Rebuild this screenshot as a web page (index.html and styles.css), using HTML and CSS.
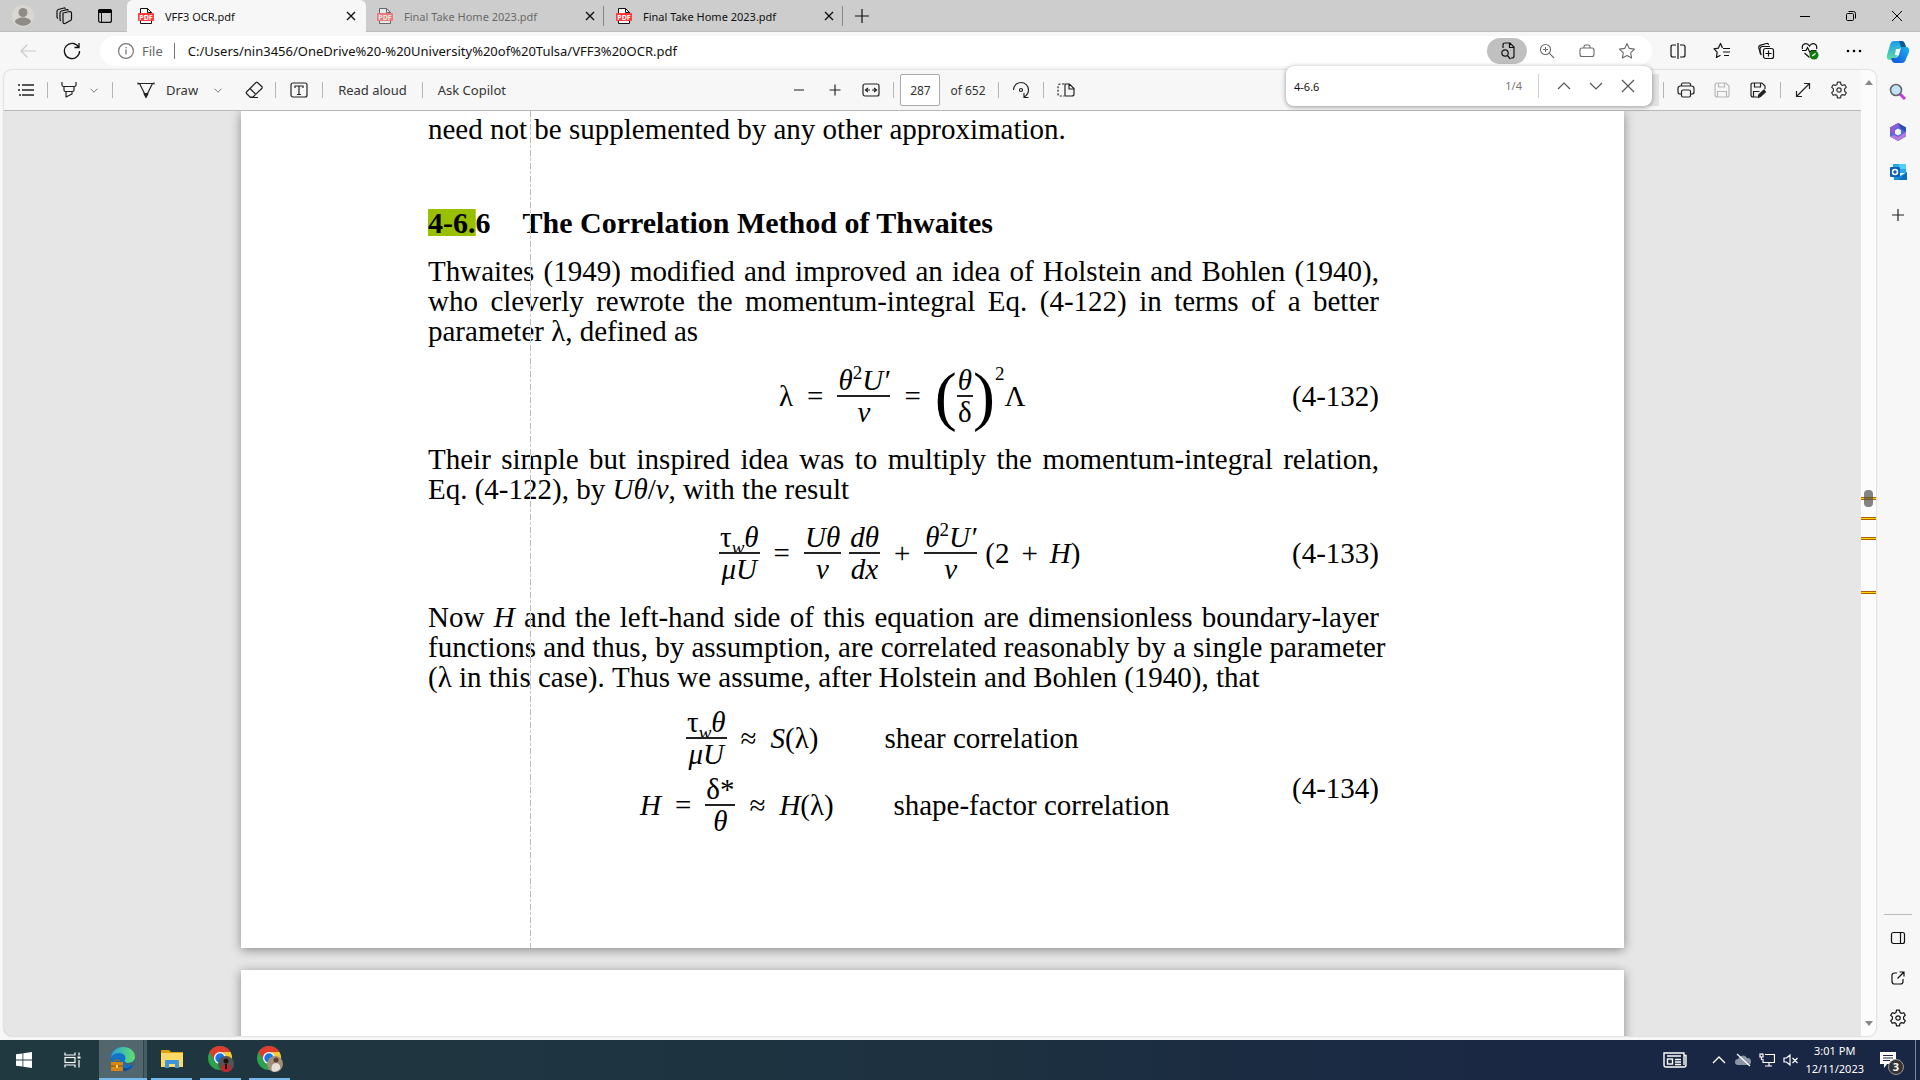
FILE: index.html
```html
<!DOCTYPE html>
<html lang="en">
<head>
    <meta charset="UTF-8">
    <meta name="viewport" content="width=device-width, initial-scale=1.0">
    <title>VFF3 OCR.pdf</title>
    <link rel="stylesheet" href="styles.css">
</head>
<body>

    <!-- Shared icons -->
    <svg class="defs" width="0" height="0">
        <symbol id="pdf" viewBox="0 0 16 16">
            <path d="M2.5 15.5v-15h7l4 4v11z" fill="#fff" stroke="#111"/>
            <path d="M9.5.5v4h4" fill="none" stroke="#111"/>
            <rect y="5" width="16" height="8" rx="1" fill="#ff3b3b"/>
            <text x="8" y="11.500" class="pdf-label">PDF</text>
        </symbol>
        <symbol id="x" viewBox="0 0 16 16"><path d="M4 4l8 8M12 4l-8 8" fill="none" stroke="currentColor" stroke-width="1.400"/></symbol>
        <symbol id="down" viewBox="0 0 16 16"><path d="M4 6.500l4 4 4-4" fill="none" stroke="currentColor"/></symbol>
        <symbol id="gear" viewBox="0 0 18 18">
            <g fill="none" stroke="currentColor" stroke-width="1.200" stroke-linejoin="round">
                <path d="M7.500 1.200h3l.5 2.300 1.500.9 2.300-.7 1.500 2.600-1.700 1.600v2.200l1.700 1.600-1.500 2.600-2.300-.7-1.500.9-.5 2.300h-3L7 14.500l-1.500-.9-2.300.7-1.500-2.600 1.700-1.600V7.900L1.700 6.300l1.500-2.600 2.300.7L7 3.500z"/>
                <circle cx="9" cy="9" r="2.200"/>
            </g>
        </symbol>
        <symbol id="chrome" viewBox="0 0 26 26">
            <circle cx="12" cy="12" r="12" fill="#2ba24c"/>
            <path d="M1.600 6A12 12 0 0 1 22.400 6H12a6 6 0 0 0-5.200 9z" fill="#e33b2e"/>
            <path d="M22.400 6A12 12 0 0 1 12 24l5.200-9A6 6 0 0 0 12 6z" fill="#fcc934"/>
            <circle cx="12" cy="12" r="6" fill="#fff"/>
            <circle cx="12" cy="12" r="4.700" fill="#1a73e8"/>
        </symbol>
    </svg>

    <!-- Tab strip -->
    <header class="tabstrip">
        <button class="strip-btn" aria-label="Profile">
            <svg width="22" height="22" viewBox="0 0 22 22"><circle cx="11" cy="11" r="11" fill="#dad7d3"/><circle cx="11" cy="7.500" r="4.500" fill="#8e8a86"/><path d="M3 17c0-6 16-6 16 0-4 5-12 5-16 0z" fill="#8e8a86"/></svg>
        </button>
        <button class="strip-btn" aria-label="Workspaces">
            <svg width="18" height="18" viewBox="0 0 18 18" fill="none" stroke="#111" stroke-width="1.200" stroke-linejoin="round"><path d="M8 6l7-1.500q1.500 0 1.500 1.500v6q0 1-1 1.500L10 16.500q-2 .5-2-1.500z"/><path d="M13.500 3.500Q13 2.500 12 2.700L6.500 4Q5 4.500 5 6v6.500q0 1 1 1.200M10.500 1.700Q10 .8 9 1L3.300 2.500Q2 3 2 4.300V10q0 1 1 1.500"/></svg>
        </button>
        <button class="strip-btn" aria-label="Tab actions">
            <svg width="16" height="16" viewBox="0 0 16 16"><rect x="1.600" y="1.600" width="12.800" height="12.800" rx="2" fill="none" stroke="#111" stroke-width="1.200"/><path d="M1 5V3q0-2 2-2h10q2 0 2 2v2z"/><path d="M4.500 5v9.500" stroke="#111"/></svg>
        </button>
        <div class="tab active">
            <svg class="favicon"><use href="#pdf"/></svg>
            <span>VFF3 OCR.pdf</span>
            <button aria-label="Close tab"><svg width="16" height="16"><use href="#x"/></svg></button>
        </div>
        <div class="tab sleeping">
            <svg class="favicon"><use href="#pdf"/></svg>
            <span>Final Take Home 2023.pdf</span>
            <button aria-label="Close tab"><svg width="16" height="16"><use href="#x"/></svg></button>
        </div>
        <div class="tab">
            <svg class="favicon"><use href="#pdf"/></svg>
            <span>Final Take Home 2023.pdf</span>
            <button aria-label="Close tab"><svg width="16" height="16"><use href="#x"/></svg></button>
        </div>
        <button class="new-tab" aria-label="New tab"><svg width="16" height="16" viewBox="0 0 16 16"><path d="M8 1v14M1 8h14" stroke="#111" stroke-width="1.200"/></svg></button>
        <div class="window-controls">
            <button aria-label="Minimize"><svg width="12" height="12" viewBox="0 0 12 12"><path d="M1 6.500h10" stroke="#000"/></svg></button>
            <button aria-label="Restore"><svg width="12" height="12" viewBox="0 0 12 12" fill="none" stroke="#000"><rect x="1.500" y="3.500" width="7" height="7" rx="1"/><path d="M3.500 1.500h5q2 0 2 2v5"/></svg></button>
            <button aria-label="Close"><svg width="12" height="12" viewBox="0 0 12 12"><path d="M1 1l10 10M11 1L1 11" stroke="#000"/></svg></button>
        </div>
    </header>

    <div class="browser">
        <div class="window">
            <!-- Address bar -->
            <nav class="navbar">
                <button aria-label="Back" disabled><svg width="18" height="18" viewBox="0 0 18 18" fill="none" stroke="#c9c9c9" stroke-width="1.200"><path d="M17 9H2M8.500 2.500L2 9l6.500 6.500"/></svg></button>
                <button aria-label="Refresh"><svg width="18" height="18" viewBox="0 0 18 18" fill="none" stroke="#111" stroke-width="1.300"><path d="M15.500 5A7.600 7.600 0 1 0 16.600 9M16 1v4.500h-4.500"/></svg></button>
                <div class="omnibox">
                    <svg width="18" height="18" viewBox="0 0 18 18"><circle cx="9" cy="9" r="7.400" fill="none" stroke="#777" stroke-width="1.200"/><path d="M9 7.500v5M9 5v1.300" stroke="#777" stroke-width="1.300"/></svg>
                    <label for="url">File</label>
                    <input id="url" type="text" value="C:/Users/nin3456/OneDrive%20-%20University%20of%20Tulsa/VFF3%20OCR.pdf">
                    <button class="on" aria-label="Find on page"><svg width="16" height="18" viewBox="0 0 16 18" fill="none" stroke="#111" stroke-width="1.200"><path d="M4 6V3q0-2 2-2h5l4 4v9q0 2-2 2h-1M10.500 1v4.500H15"/><circle cx="6" cy="11" r="3.200"/><path d="M8.300 13.500l3.200 3.500"/></svg></button>
                    <button aria-label="Zoom"><svg width="16" height="16" viewBox="0 0 16 16" fill="none" stroke="#6b6b6b" stroke-width="1.100"><circle cx="6.500" cy="6.500" r="5"/><path d="M10.200 10.200L15 15M4 6.500h5M6.500 4v5"/></svg></button>
                    <button aria-label="Shopping"><svg width="16" height="16" viewBox="0 0 16 16" fill="none" stroke="#6b6b6b" stroke-width="1.100"><rect x="1" y="5" width="14" height="8.500" rx="2"/><path d="M5 5V3.500Q5 2 6.500 2h3Q11 2 11 3.500V5"/></svg></button>
                    <button aria-label="Favorite"><svg width="18" height="18" viewBox="0 0 18 18" fill="none" stroke="#6b6b6b" stroke-width="1.100" stroke-linejoin="round"><path d="M9 1.500l2.300 4.900 5.200.7-3.800 3.700.9 5.300L9 13.600l-4.600 2.500.9-5.300L1.500 7.100l5.200-.7z"/></svg></button>
                </div>
                <button aria-label="Split screen"><svg width="18" height="18" viewBox="0 0 18 18" fill="none" stroke="#111" stroke-width="1.200"><path d="M7 3H4Q2 3 2 5v8q0 2 2 2h3M11 3h3q2 0 2 2v8q0 2-2 2h-3M9 1v16"/></svg></button>
                <button aria-label="Favorites"><svg width="18" height="18" viewBox="0 0 18 18" fill="none" stroke="#111" stroke-width="1.200" stroke-linejoin="round"><path d="M9.500 6L7.500 1.500 5.300 6.200 1 6.800l3.200 3.400-.8 5.300 4.100-2.200M10 6.500h7M10 10h7M11 13.500h5"/></svg></button>
                <button aria-label="Collections"><svg width="18" height="18" viewBox="0 0 18 18" fill="none" stroke="#111" stroke-width="1.200"><path d="M4 12L1.800 6Q1.300 4 3 3.400L9.500 1.500q1.700-.3 2.300 1.300"/><path d="M4.500 13Q3 12 3 10V7q0-2.500 2.500-2.500H13"/><rect x="6.500" y="6.500" width="10" height="10" rx="2" fill="#f7f7f7"/><path d="M11.500 8.500v6M8.500 11.500h6"/></svg></button>
                <button aria-label="Browser essentials"><svg width="18" height="18" viewBox="0 0 18 18" fill="none" stroke="#111" stroke-width="1.200"><path d="M1.500 7C0 1.500 6 0 8.500 4 11 0 17 1.500 15.500 7M1 8.500h4l1.500-3 2.500 5 1.500-2h5M3.500 11l5 4.500"/><circle cx="13" cy="13" r="4.500" fill="#107c10" stroke="none"/><path d="M11.200 14l3.300-2.500" stroke="#fff"/></svg></button>
                <button aria-label="Settings and more"><svg width="16" height="4" viewBox="0 0 16 4"><circle cx="2" cy="2" r="1.300"/><circle cx="8" cy="2" r="1.300"/><circle cx="14" cy="2" r="1.300"/></svg></button>
            </nav>

            <main class="panel">
                <div class="viewer">
                    <div class="toolbar">
                        <div class="tools tools-left">
                            <button class="small" aria-label="Contents"><svg width="18" height="14" viewBox="0 0 18 14" stroke="#222" stroke-width="1.400"><path d="M1 2h2M1 7h2M5 2h12M5 7h12M5 12h12"/><path d="M4 12H2"/></svg></button>
                            <i class="sep"></i>
                            <button class="small" aria-label="Highlight"><svg width="16" height="18" viewBox="0 0 16 18" fill="none" stroke="#222" stroke-width="1.200" stroke-linejoin="round"><path d="M1 1v3q0 1.500 1.500 1.500h11Q15 5.500 15 4V1M3 5.500V9q0 1.500 1.500 1.500h7Q13 10.500 13 9V5.500M5 10.500V16l6-3v-2.500"/></svg></button>
                            <button class="chev" aria-label="Highlight options"><svg width="14" height="14"><use href="#down"/></svg></button>
                            <i class="sep"></i>
                            <button class="draw"><svg width="18" height="18" viewBox="0 0 18 18" fill="none" stroke="#222" stroke-width="1.200" stroke-linejoin="round"><path d="M1 2.500h16M2.500 2.500L9 15.500l6.500-13M1 1.500v2M17 1.500v2"/><path d="M7 12.500h4l-2 4z" fill="#222"/></svg>Draw</button>
                            <button class="chev" aria-label="Draw options"><svg width="14" height="14"><use href="#down"/></svg></button>
                            <button class="small eraser" aria-label="Erase"><svg width="18" height="18" viewBox="0 0 18 18" fill="none" stroke="#222" stroke-width="1.200" stroke-linejoin="round"><path d="M11 1.500L1.500 11q-.7.7 0 1.500l3.500 3.500h3L17 7.200q.5-.7 0-1.400L12.500 1.500q-.7-.6-1.500 0zM5 7.500l6 6M5 16.500h8"/></svg></button>
                            <i class="sep"></i>
                            <button class="add-text" aria-label="Add text"><svg width="18" height="16" viewBox="0 0 18 16" fill="none" stroke="#222" stroke-width="1.200"><rect x="1" y="1" width="16" height="14" rx="2"/><path d="M5 6V4h8v2M9 4v8.500M7 12.500h4"/></svg></button>
                            <i class="sep"></i>
                            <button class="text">Read aloud</button>
                            <i class="sep"></i>
                            <button class="text">Ask Copilot</button>
                        </div>
                        <div class="tools">
                            <button aria-label="Zoom out"><svg width="12" height="12" viewBox="0 0 12 12"><path d="M1 6h10" stroke="#888" stroke-width="2"/></svg></button>
                            <button aria-label="Zoom in"><svg width="12" height="12" viewBox="0 0 12 12"><path d="M.5 6h11M6 .5v11" stroke="#222" stroke-width="1.200"/></svg></button>
                            <button aria-label="Fit to width"><svg width="18" height="14" viewBox="0 0 18 14" fill="none" stroke="#222" stroke-width="1.200"><rect x="1" y="1" width="16" height="12" rx="2"/><path d="M3.500 7H8M10 7h4.500M6 5L3.500 7 6 9M12 5l2.500 2L12 9"/></svg></button>
                            <i class="sep"></i>
                            <input id="page-number" type="text" value="287">
                            <label for="page-number">of 652</label>
                            <i class="sep"></i>
                            <button aria-label="Rotate"><svg width="18" height="18" viewBox="0 0 18 18" fill="none" stroke="#222" stroke-width="1.200"><path d="M1.500 9A7.300 7.300 0 0 1 16.500 9q0 4-4 7M12 12v4.500h4.500"/><circle cx="9" cy="9" r="1.500"/></svg></button>
                            <i class="sep"></i>
                            <button aria-label="Page view"><svg width="18" height="14" viewBox="0 0 18 14" fill="none" stroke="#222" stroke-width="1.200"><path d="M7 1H3Q1 1 1 3v8q0 2 2 2h4" stroke-dasharray="2 1.500"/><path d="M8 1h4.500L17 5.500V11q0 2-2 2H8zM12 1v5h5"/></svg></button>
                        </div>
                        <div class="tools tools-right">
                            <button class="pressed" aria-label="Find"></button>
                            <i class="sep"></i>
                            <button aria-label="Print"><svg width="18" height="16" viewBox="0 0 18 16" fill="none" stroke="#222" stroke-width="1.200"><path d="M4.500 4V2.500Q4.500 1 6 1h6q1.500 0 1.500 1.500V4M4.500 12H3q-2 0-2-2V6.500Q1 4 3.500 4h11Q17 4 17 6.500V10q0 2-2 2h-1.500"/><rect x="4.500" y="8" width="9" height="7" rx="1.500"/></svg></button>
                            <button aria-label="Save" disabled><svg width="16" height="16" viewBox="0 0 16 16" fill="none" stroke="#b8b8b8" stroke-width="1.200"><path d="M3 1h9l3 3v9q0 2-2 2H3q-2 0-2-2V3q0-2 2-2zM4.500 1v4h6V1M3.500 15V9.500h9V15"/></svg></button>
                            <button aria-label="Save as"><svg width="16" height="16" viewBox="0 0 16 16" fill="none" stroke="#222" stroke-width="1.200"><path d="M7 15H3q-2 0-2-2V3q0-2 2-2h9l3 3v3M4.500 1v4h6V1M3.500 15V9.500h6"/><path d="M8 15.500l1-3 5-4.500 1.500 2-5 4.500z" fill="#222"/></svg></button>
                            <i class="sep"></i>
                            <button aria-label="Full screen"><svg width="16" height="16" viewBox="0 0 16 16" fill="none" stroke="#222" stroke-width="1.200"><path d="M9 1.500h5.500V7M7 14.500H1.500V9M14.500 1.500l-13 13"/></svg></button>
                            <button aria-label="Settings"><svg width="18" height="18"><use href="#gear"/></svg></button>
                        </div>
                    </div>

                    <!-- Document -->
                    <div class="document">
                        <article class="page">
                            <p class="lead">need not be supplemented by any other approximation.</p>
                            <h2><mark>4-6.</mark>6<span>The Correlation Method of Thwaites</span></h2>
                            <p>
                                <span class="full">Thwaites (1949) modified and improved an idea of Holstein and Bohlen (1940),</span>
                                <span class="full">who cleverly rewrote the momentum-integral Eq. (4-122) in terms of a better</span>
                                <span>parameter λ, defined as</span>
                            </p>
                            <div class="equation eq-132">
                                <span>λ</span><span>=</span>
                                <span class="frac"><span><i>θ</i><sup>2</sup><i>U′</i></span><span><i>ν</i></span></span>
                                <span>=</span>
                                <span class="group"><span class="big">(</span><span class="frac"><span><i>θ</i></span><span>δ</span></span><span class="big">)</span><sup class="power">2</sup><span>Λ</span></span>
                                <span class="number">(4-132)</span>
                            </div>
                            <p>
                                <span class="full">Their simple but inspired idea was to multiply the momentum-integral relation,</span>
                                <span>Eq. (4-122), by <i>Uθ</i>/<i>ν</i>, with the result</span>
                            </p>
                            <div class="equation eq-133">
                                <span class="frac"><span>τ<sub>w</sub><i>θ</i></span><span><i>μU</i></span></span>
                                <span>=</span>
                                <span class="group pair"><span class="frac"><span><i>Uθ</i></span><span><i>ν</i></span></span><span class="frac"><span><i>dθ</i></span><span><i>dx</i></span></span></span>
                                <span>+</span>
                                <span class="group pair"><span class="frac"><span><i>θ</i><sup>2</sup><i>U′</i></span><span><i>ν</i></span></span><span class="group sum"><span>(2</span><span>+</span><span><i>H</i>)</span></span></span>
                                <span class="number">(4-133)</span>
                            </div>
                            <p>
                                <span class="full">Now <i>H</i> and the left-hand side of this equation are dimensionless boundary-layer</span>
                                <span class="full">functions and thus, by assumption, are correlated reasonably by a single parameter</span>
                                <span>(λ in this case). Thus we assume, after Holstein and Bohlen (1940), that</span>
                            </p>
                            <div class="system">
                                <div class="rows">
                                    <div class="equation eq-shear">
                                        <span class="frac"><span>τ<sub>w</sub><i>θ</i></span><span><i>μU</i></span></span>
                                        <span>≈</span>
                                        <span class="term"><i>S</i>(λ)</span>
                                        <span class="note">shear correlation</span>
                                    </div>
                                    <div class="equation">
                                        <span><i>H</i></span><span>=</span>
                                        <span class="frac"><span>δ*</span><span><i>θ</i></span></span>
                                        <span>≈</span>
                                        <span class="term"><i>H</i>(λ)</span>
                                        <span class="note">shape-factor correlation</span>
                                    </div>
                                </div>
                                <span class="number">(4-134)</span>
                            </div>
                        </article>
                        <article class="page next"></article>
                    </div>
                </div>

                <!-- Scrollbar with search hits -->
                <div class="scrollbar">
                    <i class="arrow up"></i>
                    <i class="hit" style="top: 44.2%"></i>
                    <i class="hit" style="top: 46.3%"></i>
                    <i class="hit" style="top: 48.3%"></i>
                    <i class="hit" style="top: 53.9%"></i>
                    <i class="thumb" style="top: 43.5%"></i>
                    <i class="arrow down"></i>
                </div>
            </main>

            <form class="find">
                <input type="text" value="4-6.6" aria-label="Find on page">
                <span>1/4</span>
                <button type="button" aria-label="Previous"><svg width="16" height="16" viewBox="0 0 16 16"><path d="M2 11l6-6 6 6" fill="none" stroke="#555" stroke-width="1.200"/></svg></button>
                <button type="button" aria-label="Next"><svg width="16" height="16" viewBox="0 0 16 16"><path d="M2 5l6 6 6-6" fill="none" stroke="#555" stroke-width="1.200"/></svg></button>
                <button type="button" aria-label="Close"><svg width="16" height="16" viewBox="0 0 16 16"><path d="M2 2l12 12M14 2L2 14" fill="none" stroke="#555" stroke-width="1.200"/></svg></button>
            </form>
        </div>

        <!-- Edge sidebar -->
        <aside class="sidebar">
            <button aria-label="Copilot"><svg width="24" height="24" viewBox="0 0 24 24">
                <defs><linearGradient id="cp1" x1="0" y1="0" x2="0" y2="1"><stop offset="0" stop-color="#1a9cf0"/><stop offset="1" stop-color="#5fe0a0"/></linearGradient><linearGradient id="cp2" x1="1" y1="0" x2="0" y2="1"><stop offset="0" stop-color="#18b4f0"/><stop offset="1" stop-color="#1450d8"/></linearGradient></defs>
                <path d="M8 1h8q2 0 3 3l1 3h-4l-3 2-3 10-3 1H4q-4 0-3-5L4 5q1-4 4-4z" fill="url(#cp1)"/>
                <path d="M16 23H9q-2 0-3-2l-1-3h5l3-3 2-8h5q4 0 3 5l-3 7q-1 4-4 4z" fill="url(#cp2)"/>
                <path d="M13 1h3q2 0 3 3l1 3h-5z" fill="#0b5a94"/><path d="M10 9h4l-2 6H9z" fill="#fff"/></svg></button>
            <button aria-label="Search"><svg width="18" height="18" viewBox="0 0 18 18"><path d="M11 11l5 5" stroke="#c239e6" stroke-width="3"/><circle cx="7" cy="7" r="5.500" fill="#bfe4f8" stroke="#666" stroke-width="1.600"/></svg></button>
            <button aria-label="Microsoft 365"><svg width="18" height="18" viewBox="0 0 18 18"><path d="M9 0l8 4.500v9L9 18l-8-4.500v-9z" fill="#5568d8"/><path d="M1 9v-4.500L9 0l3 2-6 4v6z" fill="#8c5fd0"/><path d="M1 13.500L9 18l8-4.500V9l-8 5-4-2z" fill="#b77ae0"/><path d="M9 0l8 4.500V9l-5-3z" fill="#2a50b8"/><path d="M9 5.500l3 1.800v3.400l-3 1.800-3-1.800V7.300z" fill="#f7f7f7"/></svg></button>
            <button aria-label="Outlook"><svg width="18" height="18" viewBox="0 0 18 18"><path d="M4 1h12q1 0 1 1v8H4z" fill="#28a8ea"/><path d="M10 1h7v5h-7z" fill="#50d0f8"/><path d="M4 9l7 4 7-4v8H5z" fill="#1490df"/><path d="M18 9v8H9z" fill="#0f6cbd"/><rect x="1" y="4" width="10" height="10" rx="1" fill="#0a62b8"/><circle cx="6" cy="9" r="2.500" fill="none" stroke="#fff" stroke-width="1.500"/></svg></button>
            <button aria-label="Customize"><svg width="14" height="14" viewBox="0 0 14 14"><path d="M1 7h12M7 1v12" stroke="#222" stroke-width="1.200"/></svg></button>
            <hr>
            <button aria-label="Hide sidebar"><svg width="16" height="16" viewBox="0 0 16 16" fill="none" stroke="#111" stroke-width="1.200"><rect x="1.500" y="2.500" width="13" height="11" rx="2"/><path d="M10.500 2.500v11"/></svg></button>
            <button aria-label="Open in new tab"><svg width="16" height="16" viewBox="0 0 16 16" fill="none" stroke="#111" stroke-width="1.200"><path d="M7 3H4.500Q2 3 2 5.500v6Q2 14 4.500 14h6q2.500 0 2.500-2.500V9M9.500 2H14v4.500M14 2L7.500 8.500"/></svg></button>
            <button aria-label="Settings"><svg width="18" height="18"><use href="#gear"/></svg></button>
        </aside>
    </div>

    <!-- Windows taskbar -->
    <footer class="taskbar">
        <button aria-label="Start"><svg width="16" height="16" viewBox="0 0 16 16" fill="#fff"><path d="M0 2.300L6.500 1.400v6.200H0zM7.300 1.300L16 0v7.600H7.300zM0 8.400h6.500v6.200L0 13.700zM7.300 8.400H16V16l-8.700-1.300z"/></svg></button>
        <button aria-label="Task view"><svg width="17" height="16" viewBox="0 0 17 16" fill="none" stroke="#fff" stroke-width="1.200"><path d="M1 .5V3h10V.5M1 15.500V13h10v2.500M15 .5v3M15 8v7.500"/><rect x="1" y="5.500" width="10" height="5"/><path d="M13.500 5.500h3" stroke-width="2"/></svg></button>
        <button class="app current" aria-label="Microsoft Edge"><svg width="26" height="26" viewBox="0 0 26 26">
            <defs><linearGradient id="ed" x1="0" y1="0" x2="1" y2="0"><stop offset="0" stop-color="#2aa0e8"/><stop offset="1" stop-color="#5fe06a"/></linearGradient></defs>
            <circle cx="13" cy="13" r="12" fill="#1272c8"/>
            <path d="M1 13C1 5 7 1 13 1c8 0 12 5 12 10 0 4-4 6-7 6s-4-2-3-3c2-4-2-7-6-7-5 0-8 3-8 6z" fill="url(#ed)"/>
            <path d="M15 14c-1 2 1 3 3 3 3 0 6-1 7-4v6l-6 0c-4 0-5-3-4-5z" fill="#47616b"/>
            <path d="M9 13c-2 6 4 10 9 9l5-3c-2 4-6 6-10 6-6 0-8-8-4-12z" fill="#0c4a9c"/>
            <rect x="1" y="16" width="12" height="9" fill="#d98410"/><path d="M1 20h12" stroke="#8a4a08"/><path d="M5 16v-2h4v2" fill="none" stroke="#b86a08"/><path d="M6 19h2v3H6z" fill="#ffe08a"/></svg></button>
        <button class="app" aria-label="File Explorer"><svg width="22" height="20" viewBox="0 0 22 20"><path d="M0 1h8l2 2h12v15H0z" fill="#e0a010"/><path d="M0 4h22v14H0z" fill="#ffd968"/><path d="M4 19v-7q0-1 1-1h12q1 0 1 1v7h-4v-4H8v4z" fill="#3d95dc"/></svg></button>
        <button class="app" aria-label="Chrome"><svg width="26" height="26" viewBox="0 0 26 26"><use href="#chrome" width="26" height="26"/><circle cx="18" cy="18" r="8" fill="#555"/><circle cx="18" cy="15" r="2.500" fill="#1c1210"/><path d="M13 24q0-6 5-6t5 6q-5 4-10 0z" fill="#c0262c"/><path d="M17 18h2v5h-2z" fill="#111"/></svg></button>
        <button class="app" aria-label="Chrome"><svg width="26" height="26" viewBox="0 0 26 26"><use href="#chrome" width="26" height="26"/><circle cx="18" cy="18" r="8" fill="#a58e78"/><circle cx="19" cy="14" r="2.500" fill="#5a4030"/><path d="M15 25q-2-7 4-8 5 1 4 6-4 4-8 2z" fill="#e6e0da"/></svg></button>
        <div class="tray">
            <button class="news" aria-label="News"><svg width="24" height="16" viewBox="0 0 24 16" fill="none" stroke="#fff" stroke-width="1.400"><path d="M21 3.500h2V13q0 2-2 2H3q-2 0-2-2V1h20v12"/><rect x="4.500" y="7" width="5" height="5"/><path d="M4 4h14M12 7.500h6M12 10h6M12 12.500h6"/></svg></button>
            <button aria-label="Hidden icons"><svg width="14" height="14" viewBox="0 0 14 14"><path d="M1 10l6-6 6 6" fill="none" stroke="#fff" stroke-width="1.400"/></svg></button>
            <button aria-label="OneDrive"><svg width="16" height="14" viewBox="0 0 16 14"><path d="M3 12a3 3 0 0 1 0-6 5 5 0 0 1 9-1 3.500 3.500 0 0 1 1 7z" fill="#8c95a3"/><path d="M2 1l13 12" stroke="#fff" stroke-width="1.300"/></svg></button>
            <button aria-label="Network"><svg width="16" height="14" viewBox="0 0 16 14" fill="none" stroke="#fff" stroke-width="1.200"><path d="M6 1.500h9.500v8H4V6M10 9.500V13M6 13h7"/><rect x="1" y="1" width="3" height="3"/><path d="M2.500 4v3"/></svg></button>
            <button aria-label="Volume"><svg width="16" height="14" viewBox="0 0 16 14" fill="none" stroke="#fff" stroke-width="1.200"><path d="M1 5v4h2.500L7 12V2L3.500 5zM9.500 5l5 5M14.500 5l-5 5"/></svg></button>
            <time>3:01 PM<br>12/11/2023</time>
            <button class="notify" aria-label="Notifications"><svg width="16" height="16" viewBox="0 0 16 16"><path d="M0 0h16v12H7l-3 4v-4H0z" fill="#fff"/><path d="M3 3.500h10M3 6h10M3 8.500h7" stroke="#1a2744"/></svg><b>3</b></button>
        </div>
    </footer>

</body>
</html>
```

FILE: styles.css
```css
* {
    box-sizing: border-box;
}
body {
    margin: 0;
    height: 100vh;
    display: flex;
    flex-direction: column;
    overflow: hidden;
    background: #f7f7f7;
    color: #111;
    font-family: "Noto Sans", "Open Sans", sans-serif;
    font-size: 13px;
}
button {
    display: flex;
    align-items: center;
    justify-content: center;
    padding: 0;
    border: none;
    background: none;
    color: inherit;
    font: inherit;
}
input {
    border: none;
    outline: none;
    background: none;
    color: inherit;
    font: inherit;
}
svg {
    display: block;
    flex: none;
}
.defs {
    position: absolute;
}
.pdf-label {
    fill: #fff;
    font-size: 7px;
    font-weight: bold;
    text-anchor: middle;
}

/* Tab strip */
.tabstrip {
    display: flex;
    flex: none;
    height: 32px;
    padding-left: 2px;
    background: #cdcdcd;
    box-shadow: inset 0 -1px #bdbdbd;
    font-size: 11px;
}
.strip-btn {
    width: 41px;
}
.tab {
    display: flex;
    align-items: center;
    width: 239px;
    padding: 0 6px 0 11px;
    border-right: 1px solid transparent;
}
.tab span {
    flex: 1;
    margin-left: 11px;
    white-space: nowrap;
}
.tab:not(.active) {
    background: linear-gradient(#888, #888) right center / 1px 20px no-repeat;
}
.tab.active {
    margin-left: 2px;
    border-radius: 6px 6px 0 0;
    background: #f7f7f7;
}
.sleeping span,
.sleeping .favicon {
    opacity: 0.55;
}
.favicon {
    width: 16px;
    height: 16px;
}
.new-tab {
    width: 36px;
}
.window-controls {
    display: flex;
    margin-left: auto;
}
.window-controls button {
    width: 46px;
    padding-bottom: 1px;
}

/* Window */
.browser {
    display: flex;
    flex: 1;
    min-height: 0;
}
.window {
    position: relative;
    display: flex;
    flex: 1;
    flex-direction: column;
    min-width: 0;
}
.navbar {
    display: flex;
    align-items: center;
    height: 38px;
    padding-left: 6px;
}
.navbar > button {
    width: 44px;
    height: 30px;
}
.omnibox {
    display: flex;
    flex: 1;
    align-items: center;
    height: 30px;
    margin: 0 4px 0 6px;
    padding: 0 5px 0 17px;
    border-radius: 15px;
    background: #fff;
}
.omnibox label {
    margin: 0 11px 0 7px;
    color: #666;
}
.omnibox input {
    flex: 1;
    padding: 0 0 0 13px;
    border-left: 1px solid #777;
    line-height: 16px;
}
.omnibox button {
    width: 40px;
    height: 26px;
    border-radius: 13px;
}
.omnibox .on {
    background: #c0c0c0;
}

/* PDF viewer */
.panel {
    display: flex;
    flex: 1;
    min-height: 0;
    margin: 0 0 4px 4px;
    border-radius: 8px;
    background: #e6e6e6;
    box-shadow: 0 0 2px rgba(0, 0, 0, 0.3);
    overflow: hidden;
}
.viewer {
    display: flex;
    flex: 1;
    flex-direction: column;
    min-width: 0;
}
.toolbar {
    display: grid;
    grid-template-columns: 1fr auto 1fr;
    flex: none;
    height: 41px;
    border-bottom: 1px solid #b8b8b8;
    background: #f7f7f7;
    color: #333;
}
.tools {
    display: flex;
    align-items: center;
}
.tools button {
    width: 36px;
    height: 32px;
}
.sep {
    width: 1px;
    height: 16px;
    margin: 0 4px;
    background: #b5b5b5;
}
.tools-left {
    padding-left: 8px;
}
.tools-left .sep {
    margin: 0 7px;
}
.tools .small {
    width: 28px;
}
.tools .add-text {
    width: 32px;
}
.tools .chev {
    width: 22px;
    color: #666;
}
.tools .draw {
    width: auto;
    gap: 11px;
    padding: 0 9px 0 17px;
}
.tools .eraser {
    margin-left: 11px;
}
.tools .text {
    width: auto;
    padding: 0 8px;
}
.tools input {
    width: 40px;
    height: 32px;
    margin-left: 2px;
    border: 1px solid #aaa;
    border-radius: 2px;
    background: #fff;
    font-size: 12px;
    text-align: center;
}
.tools label {
    padding: 0 8px 0 10px;
    font-size: 12px;
    white-space: nowrap;
}
.tools-right {
    justify-content: flex-end;
    padding-right: 4px;
}
.tools-right .pressed {
    background: #e2e2e2;
}

/* Scanned pages */
.document {
    flex: 1;
    min-height: 0;
    overflow: hidden;
    color: #000;
    font-family: "Liberation Serif", serif;
    font-size: 29px;
    line-height: 30px;
}
.page {
    position: relative;
    width: calc(100% - 474px);
    margin: 0 auto 22px;
    padding: 3px 245px 112px 187px;
    background: #fff;
    box-shadow: 0 2px 10px rgba(0, 0, 0, 0.4);
}
.page::after {
    content: "";
    position: absolute;
    top: 0;
    bottom: 0;
    left: 289px;
    width: 1px;
    background: repeating-linear-gradient(#bbb 0 6px, #eee 6px 8px, #ccc 8px 11px, #fff 11px 13px);
}
.page.next {
    min-height: 100px;
}
.page.next::after {
    display: none;
}
.page p {
    margin: 0;
}
.page p span {
    display: block;
    white-space: nowrap;
}
.page p .full {
    text-align: justify;
    text-align-last: justify;
}
.page .lead {
    margin-bottom: 64px;
}
.page h2 {
    margin: 0 0 18px;
    font-size: 30px;
    line-height: 30px;
}
.page h2 span {
    margin-left: 32px;
}
mark {
    background: linear-gradient(#99c000, #99c000) center / 100% 27px no-repeat;
    color: inherit;
}
.equation {
    display: flex;
    align-items: center;
    gap: 14px;
}
.eq-132 {
    margin: 19px 0 17px;
    padding-left: 351px;
}
.eq-133 {
    margin: 18px 0;
    padding-left: 291px;
}
.eq-shear {
    padding-left: 46px;
}
.number {
    margin-left: auto;
}
.frac {
    display: grid;
    text-align: center;
}
.frac > span {
    padding: 0 1px;
}
.frac > span + span {
    border-top: 2px solid #222;
}
.group {
    display: flex;
    align-items: center;
}
.pair {
    gap: 8px;
}
.sum {
    gap: 12px;
}
.big {
    font-size: 66px;
    line-height: 62px;
}
sup,
sub {
    font-size: 19px;
    line-height: 0;
}
.page sub {
    font-style: italic;
}
.power {
    align-self: flex-start;
    line-height: 18px;
}
.system {
    display: flex;
    margin-top: 15px;
    padding-left: 212px;
}
.rows {
    display: grid;
    gap: 5px;
}
.term {
    width: 57px;
}
.note {
    margin-left: 43px;
}
.system .number {
    align-self: flex-end;
    padding-bottom: 33px;
}

/* Scrollbar */
.scrollbar {
    position: relative;
    display: flex;
    flex-direction: column;
    justify-content: space-between;
    align-items: center;
    width: 15px;
    padding: 10px 0;
    background: #fcfcfc;
}
.arrow {
    border: 4px solid transparent;
}
.arrow.up {
    border-top: none;
    border-bottom: 5px solid #888;
}
.arrow.down {
    border-bottom: none;
    border-top: 5px solid #888;
}
.hit {
    position: absolute;
    left: 0;
    right: 0;
    height: 3px;
    border: solid #b06000;
    border-width: 1px 0;
    background: #ffd800;
}
.thumb {
    position: absolute;
    left: 3px;
    width: 9px;
    height: 17px;
    border-radius: 4px;
    background: rgba(80, 80, 80, 0.7);
}

/* Find box */
.find {
    position: absolute;
    top: 34px;
    right: 224px;
    display: flex;
    align-items: center;
    width: 366px;
    height: 40px;
    padding: 0 8px;
    border-radius: 8px;
    background: #fff;
    box-shadow: 0 1px 5px rgba(0, 0, 0, 0.4);
    font-size: 11px;
}
.find input {
    flex: 1;
    min-width: 0;
    padding: 0;
}
.find span {
    padding-right: 16px;
    margin-right: 9px;
    border-right: 1px solid #d0d0d0;
    color: #767676;
    line-height: 24px;
}
.find button {
    width: 32px;
}

/* Sidebar */
.sidebar {
    display: flex;
    flex-direction: column;
    align-items: center;
    width: 44px;
    padding-bottom: 2px;
}
.sidebar button {
    width: 40px;
    height: 40px;
}
.sidebar button:nth-child(5) {
    margin-top: 3px;
}
.sidebar hr {
    width: 28px;
    margin: auto 0 3px;
    border: none;
    border-top: 1px solid #bbb;
}

/* Taskbar */
.taskbar {
    display: flex;
    flex: none;
    height: 40px;
    background: linear-gradient(90deg, #203840, #1d3140 50%, #1a2744 80%);
    color: #fff;
    font-size: 11px;
}
.taskbar > button {
    width: 48px;
}
.taskbar .app {
    width: 41px;
    margin-left: 8px;
    border-bottom: 2px solid #76b9ed;
}
.taskbar .current {
    width: 48px;
    margin: 0 -4px 0 3px;
    background: linear-gradient(90deg, #52666e 44px, #2c444c 44px 45px, #465b63 45px);
}
.tray {
    display: flex;
    align-items: center;
    margin-left: auto;
    padding-right: 4px;
}
.tray button {
    width: 24px;
    height: 40px;
}
.tray .news {
    width: 40px;
    margin-right: 12px;
}
time {
    padding: 0 4px 0 2px;
    line-height: 18px;
    text-align: center;
}
.tray .notify {
    position: relative;
    width: 48px;
    padding-right: 7px;
    border-right: 1px solid #7d8798;
}
.notify b {
    position: absolute;
    top: 19px;
    left: 20px;
    width: 16px;
    height: 16px;
    border: 1px solid #999;
    border-radius: 50%;
    background: #333;
    line-height: 14px;
}
```
